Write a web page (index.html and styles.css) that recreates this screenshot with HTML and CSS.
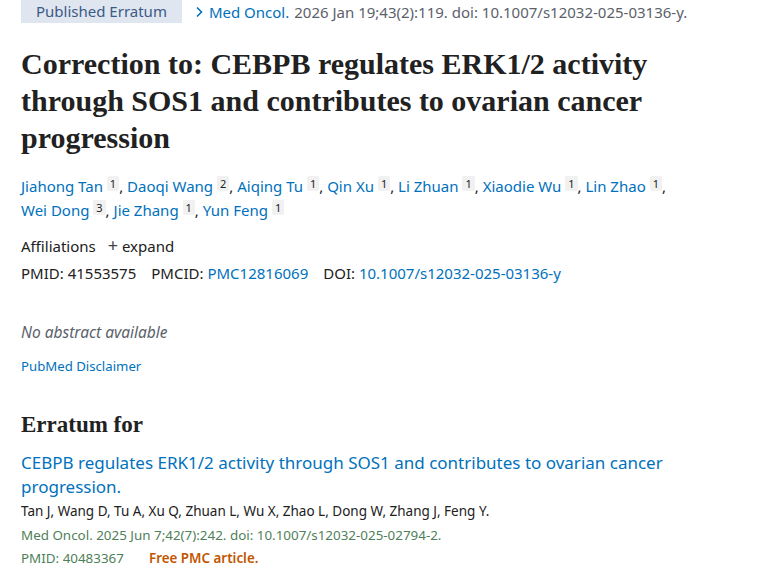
FILE: index.html
```html
<!DOCTYPE html>
<html>
<head>
<meta charset="utf-8">
<link rel="stylesheet" href="styles.css">
</head>
<body>
<main class="page">
  <div class="topline">
    <span class="badge">Published Erratum</span>
    <span class="chev"><svg width="10" height="12" viewBox="0 0 10 12"><path d="M3 1.5 L7.5 6 L3 10.5" fill="none" stroke="#0071bc" stroke-width="1.6"/></svg></span>
    <a class="link">Med Oncol.</a>
    <span class="cit">2026 Jan 19;43(2):119. doi: 10.1007/s12032-025-03136-y.</span>
  </div>

  <h1 class="title">Correction to: CEBPB regulates ERK1/2 activity through SOS1 and contributes to ovarian cancer progression</h1>

  <div class="authors">
    <a class="link">Jiahong Tan</a> <sup class="aff">1</sup>, <a class="link">Daoqi Wang</a> <sup class="aff">2</sup>, <a class="link">Aiqing Tu</a> <sup class="aff">1</sup>, <a class="link">Qin Xu</a> <sup class="aff">1</sup>, <a class="link">Li Zhuan</a> <sup class="aff">1</sup>, <a class="link">Xiaodie Wu</a> <sup class="aff">1</sup>, <a class="link">Lin Zhao</a> <sup class="aff">1</sup>,<br>
    <a class="link">Wei Dong</a> <sup class="aff">3</sup>, <a class="link">Jie Zhang</a> <sup class="aff">1</sup>, <a class="link">Yun Feng</a> <sup class="aff">1</sup>
  </div>

  <div class="affil">Affiliations <span class="plus">+</span>expand</div>

  <div class="ids">
    <span>PMID: 41553575</span>
    <span>PMCID: <a class="link">PMC12816069</a></span>
    <span>DOI: <a class="link">10.1007/s12032-025-03136-y</a></span>
  </div>

  <p class="noabs">No abstract available</p>
  <a class="link disclaimer">PubMed Disclaimer</a>

  <h2 class="sub">Erratum for</h2>
  <a class="link erlink">CEBPB regulates ERK1/2 activity through SOS1 and contributes to ovarian cancer progression.</a>
  <div class="erauth">Tan J, Wang D, Tu A, Xu Q, Zhuan L, Wu X, Zhao L, Dong W, Zhang J, Feng Y.</div>
  <div class="ercit">Med Oncol. 2025 Jun 7;42(7):242. doi: 10.1007/s12032-025-02794-2.</div>
  <div class="erpmid"><span>PMID: 40483367</span><span class="free">Free PMC article.</span></div>
</main>
</body>
</html>
```
FILE: styles.css
```css
html, body {
  margin: 0;
  padding: 0;
  background: #fff;
}
body {
  font-family: "Noto Sans", "Open Sans", sans-serif;
  color: #212121;
  font-size: 15px;
}
.page {
  padding: 0 21px;
  width: 700px;
}
.link {
  color: #0071bc;
  text-decoration: none;
}
.topline {
  display: flex;
  align-items: center;
  height: 23px;
  font-size: 15px;
  white-space: nowrap;
}
.badge {
  background: #dfe6f0;
  color: #3b5a86;
  height: 23px;
  line-height: 23px;
  padding: 0 15px;
}
.chev {
  display: inline-flex;
  margin-left: 12px;
  margin-right: 5px;
}
.cit {
  color: #5b616b;
  margin-left: 5px;
}
.title {
  font-family: "Liberation Serif", serif;
  font-weight: bold;
  font-size: 30px;
  line-height: 37px;
  margin: 22px 0 0;
  color: #212121;
}
.authors {
  margin-top: 18px;
  line-height: 24px;
  font-size: 15px;
}
.aff {
  font-size: 11px;
  background: #f1f1f1;
  color: #212121;
  padding: 0 3px;
  border-radius: 2px;
  vertical-align: 4px;
  line-height: 14px;
}
.affil {
  margin-top: 11px;
  line-height: 24px;
}
.plus {
  margin-left: 8px;
  margin-right: 4px;
  font-size: 18px;
  color: #444;
}
.ids {
  display: flex;
  gap: 15px;
  line-height: 24px;
  margin-top: 3px;
}
.noabs {
  font-style: italic;
  font-size: 15.5px;
  color: #5b616b;
  margin: 35px 0 0;
  line-height: 24px;
}
.disclaimer {
  display: block;
  font-size: 13.2px;
  margin-top: 12px;
  line-height: 20px;
}
.sub {
  font-family: "Liberation Serif", serif;
  font-weight: bold;
  font-size: 23px;
  margin: 35px 0 0;
  line-height: 28px;
}
.erlink {
  display: block;
  font-size: 17px;
  line-height: 24px;
  margin-top: 12px;
}
.erauth {
  font-size: 13.5px;
  line-height: 24px;
}
.ercit, .erpmid {
  font-size: 13.4px;
  line-height: 24px;
  color: #4f7f5a;
}
.erpmid {
  display: flex;
  gap: 25px;
  margin-top: -1px;
}
.free {
  color: #c05600;
  font-weight: 600;
}
```
